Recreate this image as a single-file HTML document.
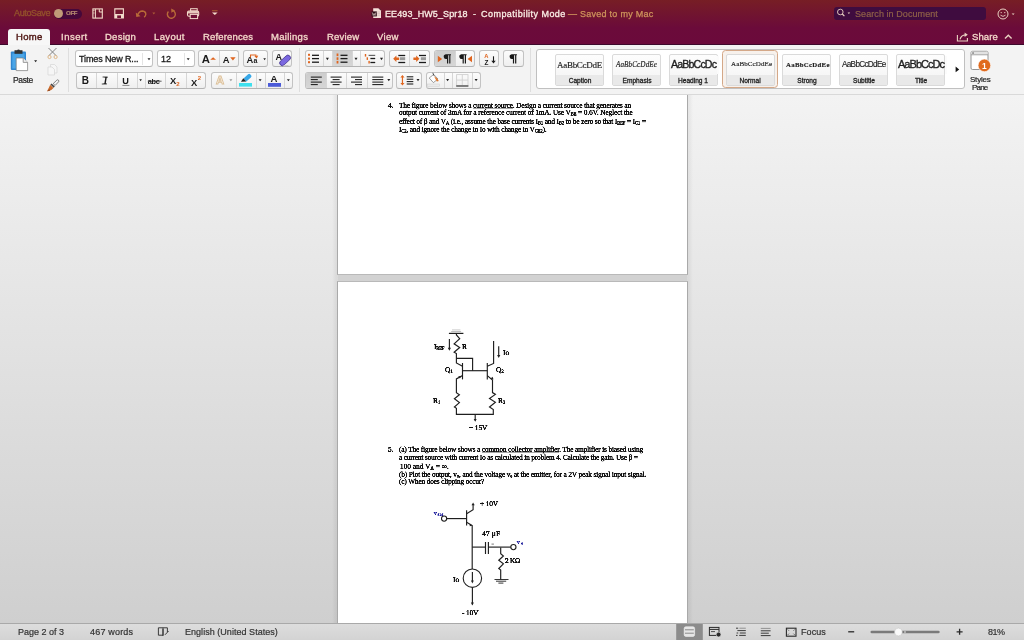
<!DOCTYPE html><html><head><meta charset="utf-8"><style>
*{margin:0;padding:0;box-sizing:border-box}
html,body{width:1024px;height:640px;overflow:hidden;font-family:"Liberation Sans",sans-serif;background:#e0e0e0;position:relative}
.a{position:absolute}
.t{position:absolute;white-space:pre;will-change:transform;-webkit-text-stroke:0.2px currentColor}
#title{left:0;top:0;width:1024px;height:44px;background:linear-gradient(#771e25 0px,#6b0b3a 28px,#6b0a3b 44px)}
#doc{left:0;top:95px;width:1024px;height:528px;background:linear-gradient(#f3f3f3,#cfcfcf)}

</style></head><body>
<div class="a" id="title"></div><div class="a" style="left:0;top:44px;width:1024px;height:1px;background:#3d0a2c"></div>
<div class="t" style="left:13.60px;top:8.20px;font-size:9.000px;line-height:10.80px;color:#93512c;letter-spacing:-0.374px;-webkit-text-stroke:0.35px currentColor;">AutoSave</div>
<div class="a" style="left:53.5px;top:8.5px;width:28.5px;height:10px;background:#45083a;border-radius:5px"></div>
<div class="a" style="left:54px;top:9px;width:9px;height:9px;background:#c19a78;border-radius:50%"></div>
<div class="t" style="left:66.00px;top:10.00px;font-size:6.000px;line-height:7.20px;color:#b58a70;font-weight:700;letter-spacing:-0.230px;">OFF</div>
<div class="t" style="left:384.70px;top:8.80px;font-size:9.000px;line-height:10.80px;color:#fbefe6;letter-spacing:0.103px;-webkit-text-stroke:0.3px currentColor;">EE493_HW5_Spr18</div>
<div class="t" style="left:472.50px;top:8.80px;font-size:9.000px;line-height:10.80px;color:#fbefe6;-webkit-text-stroke:0.3px currentColor;">-</div>
<div class="t" style="left:481.25px;top:8.80px;font-size:9.000px;line-height:10.80px;color:#fbefe6;letter-spacing:0.458px;-webkit-text-stroke:0.3px currentColor;">Compatibility Mode</div>
<div class="t" style="left:567.80px;top:8.80px;font-size:9.000px;line-height:10.80px;color:#cf955c;letter-spacing:0.261px;-webkit-text-stroke:0.25px currentColor;">— Saved to my Mac</div>
<div class="a" style="left:834.2px;top:6.8px;width:152px;height:13.3px;background:#3f0c3f;border-radius:3px"></div>
<div class="t" style="left:854.90px;top:8.70px;font-size:9.000px;line-height:10.80px;color:#8f6048;letter-spacing:0.074px;">Search in Document</div>
<div class="a" style="left:8px;top:29px;width:42px;height:16px;background:#f7f7f7;border-radius:3px 3px 0 0"></div>
<div class="t" style="left:15.60px;top:30.80px;font-size:9.500px;line-height:11.40px;color:#4e1512;letter-spacing:0.304px;-webkit-text-stroke:0.4px currentColor;">Home</div>
<div class="t" style="left:60.70px;top:30.80px;font-size:9.500px;line-height:11.40px;color:#f4dacb;letter-spacing:0.498px;-webkit-text-stroke:0.3px currentColor;">Insert</div>
<div class="t" style="left:105.40px;top:30.80px;font-size:9.500px;line-height:11.40px;color:#f4dacb;letter-spacing:0.255px;-webkit-text-stroke:0.3px currentColor;">Design</div>
<div class="t" style="left:154.20px;top:30.80px;font-size:9.500px;line-height:11.40px;color:#f4dacb;letter-spacing:0.385px;-webkit-text-stroke:0.3px currentColor;">Layout</div>
<div class="t" style="left:202.60px;top:30.80px;font-size:9.500px;line-height:11.40px;color:#f4dacb;letter-spacing:0.162px;-webkit-text-stroke:0.3px currentColor;">References</div>
<div class="t" style="left:270.70px;top:30.80px;font-size:9.500px;line-height:11.40px;color:#f4dacb;letter-spacing:0.299px;-webkit-text-stroke:0.3px currentColor;">Mailings</div>
<div class="t" style="left:326.50px;top:30.80px;font-size:9.500px;line-height:11.40px;color:#f4dacb;letter-spacing:0.180px;-webkit-text-stroke:0.3px currentColor;">Review</div>
<div class="t" style="left:376.50px;top:30.80px;font-size:9.500px;line-height:11.40px;color:#f4dacb;letter-spacing:0.311px;-webkit-text-stroke:0.3px currentColor;">View</div>
<div class="t" style="left:971.50px;top:30.80px;font-size:9.500px;line-height:11.40px;color:#f4dacb;letter-spacing:0.124px;-webkit-text-stroke:0.3px currentColor;">Share</div>
<div class="a" style="left:0px;top:45px;width:1024px;height:50px;background:#f3f3f3"></div>
<div class="a" style="left:0px;top:94px;width:1024px;height:1px;background:#d9d9d9"></div>
<div class="a" style="left:75.3px;top:50.4px;width:78.10000000000001px;height:17.000000000000007px;background:#fff;border:1px solid #c3c3c3;border-bottom-color:#b3b3b3;border-radius:3px;overflow:hidden">
</div>
<div class="a" style="left:141.5px;top:53px;width:1px;height:12px;background:#e4e4e4"></div>
<div class="t" style="left:78.50px;top:53.60px;font-size:9.000px;line-height:10.80px;color:#1a1a1a;letter-spacing:-0.120px;-webkit-text-stroke:0.3px currentColor;">Times New R...</div>
<div class="t" style="left:12.70px;top:75.20px;font-size:8.500px;line-height:10.20px;color:#222;letter-spacing:-0.346px;">Paste</div>
<div class="t" style="left:969.50px;top:75.40px;font-size:8.000px;line-height:9.60px;color:#222;letter-spacing:-0.215px;">Styles</div>
<div class="t" style="left:971.50px;top:83.20px;font-size:8.000px;line-height:9.60px;color:#222;letter-spacing:-0.823px;">Pane</div>
<div class="a" style="left:157.3px;top:50.4px;width:37.5px;height:17.000000000000007px;background:#fff;border:1px solid #c3c3c3;border-bottom-color:#b3b3b3;border-radius:3px;overflow:hidden">
</div>
<div class="a" style="left:184px;top:53px;width:1px;height:12px;background:#e4e4e4"></div>
<div class="t" style="left:160.80px;top:53.60px;font-size:9.000px;line-height:10.80px;color:#1a1a1a;-webkit-text-stroke:0.3px currentColor;">12</div>
<div class="a" style="left:198.2px;top:50.4px;width:41.0px;height:17.000000000000007px;background:linear-gradient(#fcfcfc,#efefef);border:1px solid #c3c3c3;border-bottom-color:#b3b3b3;border-radius:3px;overflow:hidden">
<div class="a" style="left:19.5px;top:0;width:1px;height:100%;background:#d6d6d6"></div>
</div>
<div class="a" style="left:242.7px;top:50.4px;width:25.69999999999999px;height:17.000000000000007px;background:linear-gradient(#fcfcfc,#efefef);border:1px solid #c3c3c3;border-bottom-color:#b3b3b3;border-radius:3px;overflow:hidden">
</div>
<div class="a" style="left:271.8px;top:50.4px;width:20.5px;height:17.000000000000007px;background:linear-gradient(#fcfcfc,#efefef);border:1px solid #c3c3c3;border-bottom-color:#b3b3b3;border-radius:3px;overflow:hidden">
</div>
<div class="a" style="left:298.5px;top:48px;width:1px;height:44px;background:#dedede"></div>
<div class="a" style="left:305.2px;top:50.4px;width:80.30000000000001px;height:17.000000000000007px;background:linear-gradient(#fcfcfc,#efefef);border:1px solid #c3c3c3;border-bottom-color:#b3b3b3;border-radius:3px;overflow:hidden">
<div class="a" style="left:25.80000000000001px;top:0;width:19.69999999999999px;height:100%;background:linear-gradient(#cdcdcd,#d6d6d6)"></div>
<div class="a" style="left:17.30000000000001px;top:0;width:1px;height:100%;background:#d6d6d6"></div>
<div class="a" style="left:25.80000000000001px;top:0;width:1px;height:100%;background:#d6d6d6"></div>
<div class="a" style="left:45.5px;top:0;width:1px;height:100%;background:#d6d6d6"></div>
<div class="a" style="left:54.30000000000001px;top:0;width:1px;height:100%;background:#d6d6d6"></div>
</div>
<div class="a" style="left:389.2px;top:50.4px;width:40.80000000000001px;height:17.000000000000007px;background:linear-gradient(#fcfcfc,#efefef);border:1px solid #c3c3c3;border-bottom-color:#b3b3b3;border-radius:3px;overflow:hidden">
<div class="a" style="left:19.19999999999999px;top:0;width:1px;height:100%;background:#d6d6d6"></div>
</div>
<div class="a" style="left:434.1px;top:50.4px;width:41.299999999999955px;height:17.000000000000007px;background:linear-gradient(#fcfcfc,#efefef);border:1px solid #c3c3c3;border-bottom-color:#b3b3b3;border-radius:3px;overflow:hidden">
<div class="a" style="left:-1.0px;top:0;width:20.799999999999955px;height:100%;background:linear-gradient(#cdcdcd,#d6d6d6)"></div>
<div class="a" style="left:19.799999999999955px;top:0;width:1px;height:100%;background:#d6d6d6"></div>
</div>
<div class="a" style="left:478.5px;top:50.4px;width:20.80000000000001px;height:17.000000000000007px;background:linear-gradient(#fcfcfc,#efefef);border:1px solid #c3c3c3;border-bottom-color:#b3b3b3;border-radius:3px;overflow:hidden">
</div>
<div class="a" style="left:503.2px;top:50.4px;width:20.400000000000034px;height:17.000000000000007px;background:linear-gradient(#fcfcfc,#efefef);border:1px solid #c3c3c3;border-bottom-color:#b3b3b3;border-radius:3px;overflow:hidden">
</div>
<div class="a" style="left:530.2px;top:48px;width:1px;height:44px;background:#dedede"></div>
<div class="a" style="left:68.2px;top:48px;width:1px;height:44px;background:#dedede"></div>
<div class="a" style="left:75.6px;top:72.4px;width:130.9px;height:16.19999999999999px;background:linear-gradient(#fcfcfc,#efefef);border:1px solid #c3c3c3;border-bottom-color:#b3b3b3;border-radius:3px;overflow:hidden">
<div class="a" style="left:19.0px;top:0;width:1px;height:100%;background:#d6d6d6"></div>
<div class="a" style="left:40.0px;top:0;width:1px;height:100%;background:#d6d6d6"></div>
<div class="a" style="left:60.0px;top:0;width:1px;height:100%;background:#d6d6d6"></div>
<div class="a" style="left:68.1px;top:0;width:1px;height:100%;background:#d6d6d6"></div>
<div class="a" style="left:88.9px;top:0;width:1px;height:100%;background:#d6d6d6"></div>
<div class="a" style="left:109.1px;top:0;width:1px;height:100%;background:#d6d6d6"></div>
</div>
<div class="a" style="left:210.5px;top:72.4px;width:82.10000000000002px;height:16.19999999999999px;background:linear-gradient(#fcfcfc,#efefef);border:1px solid #c3c3c3;border-bottom-color:#b3b3b3;border-radius:3px;overflow:hidden">
<div class="a" style="left:24.30000000000001px;top:0;width:1px;height:100%;background:#d6d6d6"></div>
<div class="a" style="left:44.19999999999999px;top:0;width:1px;height:100%;background:#d6d6d6"></div>
<div class="a" style="left:53.10000000000002px;top:0;width:1px;height:100%;background:#d6d6d6"></div>
<div class="a" style="left:72.89999999999998px;top:0;width:1px;height:100%;background:#d6d6d6"></div>
</div>
<div class="a" style="left:305.2px;top:72.4px;width:87.5px;height:16.19999999999999px;background:linear-gradient(#fcfcfc,#efefef);border:1px solid #c3c3c3;border-bottom-color:#b3b3b3;border-radius:3px;overflow:hidden">
<div class="a" style="left:-1.0px;top:0;width:20.80000000000001px;height:100%;background:linear-gradient(#cdcdcd,#d6d6d6)"></div>
<div class="a" style="left:19.80000000000001px;top:0;width:1px;height:100%;background:#d6d6d6"></div>
<div class="a" style="left:40.30000000000001px;top:0;width:1px;height:100%;background:#d6d6d6"></div>
<div class="a" style="left:61.10000000000002px;top:0;width:1px;height:100%;background:#d6d6d6"></div>
</div>
<div class="a" style="left:396.4px;top:72.4px;width:25.80000000000001px;height:16.19999999999999px;background:linear-gradient(#fcfcfc,#efefef);border:1px solid #c3c3c3;border-bottom-color:#b3b3b3;border-radius:3px;overflow:hidden">
</div>
<div class="a" style="left:425.5px;top:72.4px;width:55.10000000000002px;height:16.19999999999999px;background:linear-gradient(#fcfcfc,#efefef);border:1px solid #c3c3c3;border-bottom-color:#b3b3b3;border-radius:3px;overflow:hidden">
<div class="a" style="left:17.0px;top:0;width:1px;height:100%;background:#d6d6d6"></div>
<div class="a" style="left:25.19999999999999px;top:0;width:1px;height:100%;background:#d6d6d6"></div>
<div class="a" style="left:45.19999999999999px;top:0;width:1px;height:100%;background:#d6d6d6"></div>
</div>
<div class="a" style="left:535.5px;top:49.2px;width:429.2px;height:40.3px;background:#fff;border:1px solid #c0c0c0;border-radius:3px"></div>
<div class="a" style="left:722.2px;top:50.2px;width:56.1px;height:38.3px;background:#f7f1ec;border:1.6px solid #d4a888;border-radius:3.5px"></div>
<div class="a" style="left:555.3px;top:53.6px;width:49px;height:32.8px;background:linear-gradient(#fdfdfd,#f3f3f3);border:1px solid #dadada;border-radius:2px;overflow:hidden"><div class="a" style="left:0;top:20.2px;width:100%;height:12px;background:#e9e9e9"></div></div>
<div class="t" style="left:579.80px;top:76.64px;font-size:6.600px;line-height:7.92px;color:#222;transform:translateX(-50%);-webkit-text-stroke:0.3px currentColor;">Caption</div>
<div class="a" style="left:612.1px;top:53.6px;width:49px;height:32.8px;background:linear-gradient(#fdfdfd,#f3f3f3);border:1px solid #dadada;border-radius:2px;overflow:hidden"><div class="a" style="left:0;top:20.2px;width:100%;height:12px;background:#e9e9e9"></div></div>
<div class="t" style="left:636.60px;top:76.64px;font-size:6.600px;line-height:7.92px;color:#222;transform:translateX(-50%);-webkit-text-stroke:0.3px currentColor;">Emphasis</div>
<div class="a" style="left:668.5px;top:53.6px;width:49px;height:32.8px;background:linear-gradient(#fdfdfd,#f3f3f3);border:1px solid #dadada;border-radius:2px;overflow:hidden"><div class="a" style="left:0;top:20.2px;width:100%;height:12px;background:#e9e9e9"></div></div>
<div class="t" style="left:693.00px;top:76.64px;font-size:6.600px;line-height:7.92px;color:#222;transform:translateX(-50%);-webkit-text-stroke:0.3px currentColor;">Heading 1</div>
<div class="a" style="left:725.7px;top:53.6px;width:49px;height:32.8px;background:linear-gradient(#fdfdfd,#f3f3f3);border:1px solid #dadada;border-radius:2px;overflow:hidden"><div class="a" style="left:0;top:20.2px;width:100%;height:12px;background:#e9e9e9"></div></div>
<div class="t" style="left:750.20px;top:76.64px;font-size:6.600px;line-height:7.92px;color:#222;transform:translateX(-50%);-webkit-text-stroke:0.3px currentColor;">Normal</div>
<div class="a" style="left:782.4px;top:53.6px;width:49px;height:32.8px;background:linear-gradient(#fdfdfd,#f3f3f3);border:1px solid #dadada;border-radius:2px;overflow:hidden"><div class="a" style="left:0;top:20.2px;width:100%;height:12px;background:#e9e9e9"></div></div>
<div class="t" style="left:806.90px;top:76.64px;font-size:6.600px;line-height:7.92px;color:#222;transform:translateX(-50%);-webkit-text-stroke:0.3px currentColor;">Strong</div>
<div class="a" style="left:839.1px;top:53.6px;width:49px;height:32.8px;background:linear-gradient(#fdfdfd,#f3f3f3);border:1px solid #dadada;border-radius:2px;overflow:hidden"><div class="a" style="left:0;top:20.2px;width:100%;height:12px;background:#e9e9e9"></div></div>
<div class="t" style="left:863.60px;top:76.64px;font-size:6.600px;line-height:7.92px;color:#222;transform:translateX(-50%);-webkit-text-stroke:0.3px currentColor;">Subtitle</div>
<div class="a" style="left:896.3px;top:53.6px;width:49px;height:32.8px;background:linear-gradient(#fdfdfd,#f3f3f3);border:1px solid #dadada;border-radius:2px;overflow:hidden"><div class="a" style="left:0;top:20.2px;width:100%;height:12px;background:#e9e9e9"></div></div>
<div class="t" style="left:920.80px;top:76.64px;font-size:6.600px;line-height:7.92px;color:#222;transform:translateX(-50%);-webkit-text-stroke:0.3px currentColor;">Title</div>
<div class="a" style="left:0;top:0;width:1024px;height:640px;overflow:hidden;pointer-events:none">
<div class="t" style="left:557.40px;top:60.00px;font-size:9.000px;line-height:10.80px;color:#1e1e1e;font-family:'Liberation Serif';letter-spacing:-0.286px;-webkit-text-stroke:0.15px currentColor;">AaBbCcDdE</div>
<div class="t" style="left:616.20px;top:60.88px;font-size:7.200px;line-height:8.64px;color:#1e1e1e;font-family:'Liberation Serif';font-style:italic;letter-spacing:0.069px;-webkit-text-stroke:0.15px currentColor;">AaBbCcDdEe</div>
<div class="t" style="left:671.00px;top:58.24px;font-size:10.600px;line-height:12.72px;color:#1e1e1e;letter-spacing:-0.837px;-webkit-text-stroke:0.35px currentColor;">AaBbCcDc</div>
<div class="t" style="left:730.50px;top:60.40px;font-size:7.000px;line-height:8.40px;color:#1e1e1e;font-family:'Liberation Serif';letter-spacing:0.120px;-webkit-text-stroke:0.15px currentColor;">AaBbCcDdEe</div>
<div class="t" style="left:786.00px;top:60.92px;font-size:6.800px;line-height:8.16px;color:#1e1e1e;font-family:'Liberation Serif';font-weight:700;letter-spacing:0.291px;-webkit-text-stroke:0.15px currentColor;">AaBbCcDdEe</div>
<div class="t" style="left:842.00px;top:60.08px;font-size:8.200px;line-height:9.84px;color:#1e1e1e;letter-spacing:-0.699px;-webkit-text-stroke:0.15px currentColor;">AaBbCcDdEe</div>
<div class="t" style="left:898.40px;top:58.00px;font-size:11.000px;line-height:13.20px;color:#1e1e1e;letter-spacing:-0.972px;-webkit-text-stroke:0.35px currentColor;">AaBbCcDc</div>
</div>
<div class="a" style="left:716.5px;top:56px;width:2px;height:18px;background:#fbfbfb"></div>
<div class="a" style="left:944.8px;top:56px;width:2px;height:18px;background:#fbfbfb"></div>
<div class="a" id="doc"></div>
<div class="a" style="left:332px;top:95px;width:361px;height:528px;background:linear-gradient(90deg,rgba(0,0,0,0),rgba(0,0,0,0.05) 4px,rgba(0,0,0,0.05) 357px,rgba(0,0,0,0))"></div>
<div class="a" style="left:337px;top:95px;width:351px;height:180px;background:#fff;border:1px solid #a9a9a9;border-top:none;border-bottom-color:#b9b9b9"></div>
<div class="a" style="left:338px;top:275px;width:349px;height:6px;background:#d2d2d2"></div>
<div class="a" style="left:337px;top:281px;width:351px;height:343px;background:#fff;border:1px solid #a9a9a9;border-bottom:none;border-top-color:#b9b9b9"></div>
<div class="t" style="left:387.80px;top:87.69px;font-size:28.800px;line-height:34.56px;color:#141414;height:34.56px;transform:scale(0.25000);transform-origin:0 50%;font-family:'Liberation Serif';-webkit-text-stroke:1.8px currentColor;">4.</div>
<div class="t" style="left:398.75px;top:87.69px;font-size:28.800px;line-height:34.56px;color:#141414;height:34.56px;transform:scale(0.25000);transform-origin:0 50%;font-family:'Liberation Serif';letter-spacing:-0.345px;-webkit-text-stroke:1.8px currentColor;">The figure below shows a <span style="text-decoration:underline;text-decoration-thickness:0.08em;text-underline-offset:0.03em">current source</span>. Design a current source that generates an</div>
<div class="t" style="left:398.75px;top:94.59px;font-size:28.800px;line-height:34.56px;color:#141414;height:34.56px;transform:scale(0.25000);transform-origin:0 50%;font-family:'Liberation Serif';letter-spacing:-0.279px;-webkit-text-stroke:1.8px currentColor;">output current of 3mA for a reference current of 1mA. Use V<span style="font-size:0.64em;vertical-align:-0.16em">BE</span> = 0.6V. Neglect the</div>
<div class="t" style="left:398.75px;top:103.59px;font-size:28.800px;line-height:34.56px;color:#141414;height:34.56px;transform:scale(0.25000);transform-origin:0 50%;font-family:'Liberation Serif';letter-spacing:-0.397px;-webkit-text-stroke:1.8px currentColor;">effect of β and V<span style="font-size:0.64em;vertical-align:-0.16em">A</span> (i.e., assume the base currents I<span style="font-size:0.64em;vertical-align:-0.16em">B1</span> and I<span style="font-size:0.64em;vertical-align:-0.16em">B2</span> to be zero so that I<span style="font-size:0.64em;vertical-align:-0.16em">REF</span> = I<span style="font-size:0.64em;vertical-align:-0.16em">C1</span> =</div>
<div class="t" style="left:398.75px;top:111.79px;font-size:28.800px;line-height:34.56px;color:#141414;height:34.56px;transform:scale(0.25000);transform-origin:0 50%;font-family:'Liberation Serif';letter-spacing:-0.429px;-webkit-text-stroke:1.8px currentColor;">I<span style="font-size:0.64em;vertical-align:-0.16em">C2</span>, and ignore the change in Io with change in V<span style="font-size:0.64em;vertical-align:-0.16em">CE2</span>).</div>
<div class="t" style="left:388.00px;top:431.99px;font-size:28.800px;line-height:34.56px;color:#141414;height:34.56px;transform:scale(0.25000);transform-origin:0 50%;font-family:'Liberation Serif';-webkit-text-stroke:1.8px currentColor;">5.</div>
<div class="t" style="left:399.00px;top:431.99px;font-size:28.800px;line-height:34.56px;color:#141414;height:34.56px;transform:scale(0.25000);transform-origin:0 50%;font-family:'Liberation Serif';letter-spacing:-0.409px;-webkit-text-stroke:1.8px currentColor;">(a) The figure below shows a <span style="text-decoration:underline;text-decoration-thickness:0.08em;text-underline-offset:0.03em">common collector amplifier</span>. The amplifier is biased using</div>
<div class="t" style="left:399.00px;top:439.79px;font-size:28.800px;line-height:34.56px;color:#141414;height:34.56px;transform:scale(0.25000);transform-origin:0 50%;font-family:'Liberation Serif';letter-spacing:-0.495px;-webkit-text-stroke:1.8px currentColor;">a current source with current Io as calculated in problem 4. Calculate the gain. Use β =</div>
<div class="t" style="left:399.50px;top:448.79px;font-size:28.800px;line-height:34.56px;color:#141414;height:34.56px;transform:scale(0.25000);transform-origin:0 50%;font-family:'Liberation Serif';letter-spacing:0.275px;-webkit-text-stroke:1.8px currentColor;">100 and V<span style="font-size:0.64em;vertical-align:-0.16em">A</span> = ∞.</div>
<div class="t" style="left:398.70px;top:456.54px;font-size:28.800px;line-height:34.56px;color:#141414;height:34.56px;transform:scale(0.25000);transform-origin:0 50%;font-family:'Liberation Serif';letter-spacing:-0.366px;-webkit-text-stroke:1.8px currentColor;">(b) Plot the output, v<span style="font-size:0.64em;vertical-align:-0.16em">o</span>, and the voltage v<span style="font-size:0.64em;vertical-align:-0.16em">e</span> at the emitter, for a 2V peak signal input signal.</div>
<div class="t" style="left:399.00px;top:463.79px;font-size:28.800px;line-height:34.56px;color:#141414;height:34.56px;transform:scale(0.25000);transform-origin:0 50%;font-family:'Liberation Serif';letter-spacing:-0.411px;-webkit-text-stroke:1.8px currentColor;">(c) When does clipping occur?</div>
<div class="t" style="left:434.00px;top:328.54px;font-size:29.600px;line-height:35.52px;color:#141414;height:35.52px;transform:scale(0.25000);transform-origin:0 50%;font-family:'Liberation Serif';letter-spacing:-0.910px;-webkit-text-stroke:1.8px currentColor;">I<span style="font-size:0.64em;vertical-align:-0.16em">REF</span></div>
<div class="t" style="left:461.90px;top:328.54px;font-size:29.600px;line-height:35.52px;color:#141414;height:35.52px;transform:scale(0.25000);transform-origin:0 50%;font-family:'Liberation Serif';-webkit-text-stroke:1.8px currentColor;">R</div>
<div class="t" style="left:503.20px;top:335.04px;font-size:29.600px;line-height:35.52px;color:#141414;height:35.52px;transform:scale(0.25000);transform-origin:0 50%;font-family:'Liberation Serif';-webkit-text-stroke:1.8px currentColor;">Io</div>
<div class="t" style="left:444.90px;top:352.24px;font-size:29.600px;line-height:35.52px;color:#141414;height:35.52px;transform:scale(0.25000);transform-origin:0 50%;font-family:'Liberation Serif';-webkit-text-stroke:1.8px currentColor;">Q<span style="font-size:0.64em;vertical-align:-0.16em">1</span></div>
<div class="t" style="left:495.70px;top:352.24px;font-size:29.600px;line-height:35.52px;color:#141414;height:35.52px;transform:scale(0.25000);transform-origin:0 50%;font-family:'Liberation Serif';-webkit-text-stroke:1.8px currentColor;">Q<span style="font-size:0.64em;vertical-align:-0.16em">2</span></div>
<div class="t" style="left:433.40px;top:383.34px;font-size:29.600px;line-height:35.52px;color:#141414;height:35.52px;transform:scale(0.25000);transform-origin:0 50%;font-family:'Liberation Serif';-webkit-text-stroke:1.8px currentColor;">R<span style="font-size:0.64em;vertical-align:-0.16em">1</span></div>
<div class="t" style="left:498.40px;top:383.34px;font-size:29.600px;line-height:35.52px;color:#141414;height:35.52px;transform:scale(0.25000);transform-origin:0 50%;font-family:'Liberation Serif';-webkit-text-stroke:1.8px currentColor;">R<span style="font-size:0.64em;vertical-align:-0.16em">2</span></div>
<div class="t" style="left:468.90px;top:409.74px;font-size:29.600px;line-height:35.52px;color:#141414;height:35.52px;transform:scale(0.25000);transform-origin:0 50%;font-family:'Liberation Serif';letter-spacing:-0.400px;-webkit-text-stroke:1.8px currentColor;">− 15V</div>
<div class="t" style="left:480.20px;top:486.24px;font-size:29.600px;line-height:35.52px;color:#141414;height:35.52px;transform:scale(0.25000);transform-origin:0 50%;font-family:'Liberation Serif';letter-spacing:-0.600px;-webkit-text-stroke:1.8px currentColor;">+ 10V</div>
<div class="t" style="left:481.90px;top:515.94px;font-size:29.600px;line-height:35.52px;color:#141414;height:35.52px;transform:scale(0.25000);transform-origin:0 50%;font-family:'Liberation Serif';letter-spacing:0.834px;-webkit-text-stroke:1.8px currentColor;">47 μF</div>
<div class="t" style="left:505.20px;top:543.04px;font-size:29.600px;line-height:35.52px;color:#141414;height:35.52px;transform:scale(0.25000);transform-origin:0 50%;font-family:'Liberation Serif';letter-spacing:-1.366px;-webkit-text-stroke:1.8px currentColor;">2 KΩ</div>
<div class="t" style="left:452.90px;top:561.84px;font-size:29.600px;line-height:35.52px;color:#141414;height:35.52px;transform:scale(0.25000);transform-origin:0 50%;font-family:'Liberation Serif';-webkit-text-stroke:1.8px currentColor;">Io</div>
<div class="t" style="left:461.90px;top:594.64px;font-size:29.600px;line-height:35.52px;color:#141414;height:35.52px;transform:scale(0.25000);transform-origin:0 50%;font-family:'Liberation Serif';letter-spacing:-0.593px;-webkit-text-stroke:1.8px currentColor;">- 10V</div>
<div class="t" style="left:434.30px;top:500.30px;font-size:22.000px;line-height:26.40px;color:#1a1a9a;height:26.40px;transform:scale(0.25000);transform-origin:0 50%;font-family:'Liberation Serif';letter-spacing:3.114px;-webkit-text-stroke:1.8px currentColor;">v<span style="font-size:0.64em;vertical-align:-0.16em">sig</span></div>
<div class="t" style="left:517.40px;top:529.10px;font-size:22.000px;line-height:26.40px;color:#1a1a9a;height:26.40px;transform:scale(0.25000);transform-origin:0 50%;font-family:'Liberation Serif';letter-spacing:5.933px;-webkit-text-stroke:1.8px currentColor;">v<span style="font-size:0.64em;vertical-align:-0.16em">o</span></div>
<svg class="a" style="left:0;top:0" width="1024" height="640"><g fill="none" stroke="#1e1e1e" stroke-width="1.15" stroke-linejoin="miter"><line x1="452" y1="329.9" x2="460.4" y2="329.9" stroke="#9a9a9a" stroke-width="0.5"/><line x1="451.2" y1="331.6" x2="461.1" y2="331.6" stroke="#8a8a8a" stroke-width="0.6"/><line x1="448.9" y1="333.4" x2="463.4" y2="333.4" stroke-width="1.2"/><path d="M456.4 333.4 V335 L459.7 338.6 L454.1 343.8 L459.7 347.5 L454.1 352.2 L456.4 353.6 V363 L462.5 366.3"/><path d="M456.4 358.3 H472.6 V370.7"/><path d="M462.5 363 V379.4"/><path d="M487.3 363 V379.4"/><path d="M462.5 370.7 H487.3"/><path d="M487.3 366.3 L493.6 363.4 V341"/><path d="M462.5 375.6 L456.4 378.9 V392.6 L459.4 394.7 L454.4 398.8 L459.4 402.6 L454.4 407 L456.4 408.4 V414.3 H493.3 V409.6 L489.5 407 L495.4 402.3 L489.5 398.5 L495.4 394.4 L492.5 392.6 V380 L487.3 375.6"/><path d="M458.2 376.2 l3.4 -0.2 l-1.8 2.4z" fill="#222" stroke="none"/><path d="M490.6 378.6 l2.9 0.8 l-0.9 -2.7z" fill="#222" stroke="none"/><path d="M475.2 414.3 V420.5"/><path d="M473.7 419 h3 l-1.5 2.8z" fill="#222" stroke="none"/><path d="M449.4 339 V349"/><path d="M447.8 347.8 h3.2 l-1.6 3z" fill="#222" stroke="none"/><path d="M498.7 346.3 V356.2"/><path d="M497.1 355.1 h3.2 l-1.6 3z" fill="#222" stroke="none"/><path d="M466.6 510.2 V525.5"/><path d="M466.6 513.8 L473.1 509.7 V504"/><path d="M471.5 505.2 l1.6 -2.6 l1.6 2.6z" fill="#222" stroke="none"/><circle cx="444.1" cy="518.6" r="2.6" stroke-width="1.1"/><path d="M446.7 518.6 H466.6"/><path d="M466.6 522.3 L472.2 525.5 V569"/><path d="M469.6 523.6 l2.8 1.9 l-2.6 0.8z" fill="#222" stroke="none"/><path d="M472.2 547.1 H485.5"/><path d="M485.5 542 V554 M488.4 542 V554"/><path d="M488.4 547.1 H510.8"/><circle cx="513.4" cy="547.1" r="2.6" stroke-width="1.1"/><path d="M491.5 544.1 h2.4" stroke-width="0.6"/><path d="M500.7 547.4 V553.7 L503.4 556 L498.75 560.3 L503.4 563.8 L498.75 568.5 L500.7 570 V579.5" stroke-width="1.15"/><path d="M494.5 579.5 H508.5 M496 581.2 H506.2 M498.4 583.1 H503.4" stroke-width="0.9"/><circle cx="472.4" cy="578.2" r="9.2" stroke-width="1.1"/><path d="M472.4 572 V582"/><path d="M471 580.6 h2.8 l-1.4 2.8z" fill="#222" stroke="none"/><path d="M472.4 587.4 V604.4"/><path d="M470.9 602.6 h3 l-1.5 3z" fill="#222" stroke="none"/></g></svg>
<div class="a" style="left:0px;top:623px;width:1024px;height:17px;background:linear-gradient(#dddddd,#d3d3d3);border-top:1px solid #a9a9a9"></div>
<div class="t" style="left:17.60px;top:626.80px;font-size:9.000px;line-height:10.80px;color:#333;letter-spacing:0.006px;">Page 2 of 3</div>
<div class="t" style="left:89.80px;top:626.80px;font-size:9.000px;line-height:10.80px;color:#333;letter-spacing:0.185px;">467 words</div>
<div class="t" style="left:185.00px;top:626.80px;font-size:9.000px;line-height:10.80px;color:#333;letter-spacing:0.035px;">English (United States)</div>
<div class="t" style="left:801.00px;top:626.80px;font-size:9.000px;line-height:10.80px;color:#333;letter-spacing:0.074px;">Focus</div>
<div class="t" style="left:987.70px;top:626.80px;font-size:9.000px;line-height:10.80px;color:#333;letter-spacing:-0.503px;">81%</div>
<svg class="a" style="left:0;top:0" width="1024" height="640"><rect x="92.9" y="8.9" width="9.4" height="9.2" fill="none" stroke="#f3dccb" stroke-width="1.1"/><line x1="95.4" y1="8.9" x2="95.4" y2="18.1" stroke="#f3dccb" stroke-width="1"/><path d="M99.3 9.2 v2.8 h2.7" fill="none" stroke="#f3dccb" stroke-width="1"/><rect x="93.4" y="10" width="1" height="1" fill="#f3dccb"/><rect x="93.4" y="12.5" width="1" height="1" fill="#f3dccb"/><path d="M114.8 8.9 h8.6 v9 h-8.6 z" fill="none" stroke="#f3dccb" stroke-width="1.1"/><path d="M115 14 h8.4 v4 h-8.4z" fill="#f3dccb"/><rect x="117.2" y="15.4" width="3.8" height="2.6" fill="#6e1232"/><path d="M137.2 15.8 Q139 11 142.5 11 Q146 11.5 145.8 14.5 Q145.5 16.5 144 17" fill="none" stroke="#b86a38" stroke-width="1.4"/><path d="M135.8 12.4 L136.3 17 L140.6 16.2 Z" fill="#b86a38"/><path d="M152.3 12.6 h3 l-1.5 1.8z" fill="#b86a38" opacity="0.8"/><path d="M168.4 11.5 A4 4 0 1 0 172.6 10.4" fill="none" stroke="#b86a38" stroke-width="1.4"/><path d="M171.2 8.4 L175 10.6 L171.4 12.8 Z" fill="#b86a38"/><rect x="190.6" y="8.7" width="6.6" height="2.4" fill="none" stroke="#f3dccb" stroke-width="1"/><rect x="187.5" y="11" width="11.2" height="5.2" rx="1.4" fill="none" stroke="#f3dccb" stroke-width="1.1"/><rect x="188" y="11.3" width="10.2" height="2.2" fill="#f3dccb" opacity="0.9"/><rect x="190.2" y="14.4" width="7.4" height="4.2" fill="#6e1034" stroke="#f3dccb" stroke-width="1"/><path d="M373.2 8.2 h5.6 l2.2 2.2 v7.6 h-7.8z" fill="#f4e0d8"/><path d="M378.8 8.2 l2.2 2.2" stroke="#3a1020" stroke-width="0.7"/><path d="M377.2 12 h3 M377.2 13.6 h3 M377.2 15.2 h3" stroke="#c9b0b0" stroke-width="0.6"/><rect x="371.6" y="11.4" width="5.2" height="5" fill="#2a0a14"/><path d="M372.3 12.4 l0.9 3.2 l0.9 -2.2 l0.9 2.2 l0.9 -3.2" fill="none" stroke="#f4e0d8" stroke-width="0.6"/><rect x="212" y="10" width="5.6" height="1.3" fill="#9a4a2e"/><path d="M212 12.4 h5.6 l-2.8 2.6z" fill="#f3dccb"/><rect x="10.8" y="51.5" width="15.2" height="18.5" rx="1" fill="#2f86d0"/><rect x="12.3" y="53.5" width="12.2" height="15" fill="#4aa6e8"/><path d="M14.5 50.2 h8 v3.6 h-8z" fill="#333"/><circle cx="18.5" cy="50.8" r="1.3" fill="#333"/><path d="M16.2 58 h7 l4.4 4.4 v8.2 h-11.4z" fill="#fff" stroke="#777" stroke-width="0.7"/><path d="M23.2 58 v4.4 h4.4" fill="#eee" stroke="#777" stroke-width="0.7"/><path d="M34.1 60.2 h3 l-1.5 2z" fill="#222"/><path d="M48.5 48 L56 55.5 M56.5 48 L49 55.5" stroke="#777" stroke-width="0.9" fill="none"/><circle cx="49.5" cy="57" r="1.6" fill="none" stroke="#d8a870" stroke-width="0.8"/><circle cx="55.6" cy="57" r="1.6" fill="none" stroke="#d8a870" stroke-width="0.8"/><path d="M50.5 64.5 h4 l2.5 2.5 v6 h-6.5z" fill="#f6f6f6" stroke="#d6d6d6" stroke-width="0.7"/><path d="M48 67 h4 l2.5 2.5 v5.5 h-6.5z" fill="#f6f6f6" stroke="#d6d6d6" stroke-width="0.7"/><path d="M53.2 83.6 l3.6 -3.4 a1.2 1.2 0 0 1 1.7 1.7 l-3.4 3.6z" fill="#f2f2f2" stroke="#555" stroke-width="0.7"/><path d="M51.6 83.4 l3.2 3.2 l-1.2 1.2 l-3.2 -3.2z" fill="#444"/><path d="M50.2 84.8 l3.2 3.2 q-2 3 -6 3.6 q-0.4 -0.4 0 -1 q1.6 -3 2.8 -5.8z" fill="#c96a2c"/><path d="M47.4 90.6 l2.2 -1.2 l0.4 1.4z" fill="#7a3a18"/><path d="M147.5 58.2 h3 l-1.5 2z" fill="#222"/><path d="M186.7 58.2 h3 l-1.5 2z" fill="#222"/><text x="201.7" y="62.8" font-family="Liberation Sans" font-weight="700" font-size="11.3" fill="#1a1a1a">A</text><path d="M210.2 59.8 h5.8 l-2.9 -2.6z" fill="#e0651f"/><text x="222.7" y="62.8" font-family="Liberation Sans" font-weight="700" font-size="9.4" fill="#1a1a1a">A</text><path d="M230.2 57.3 h5.4 l-2.7 3.2z" fill="#e0651f"/><text x="246.6" y="62.8" font-family="Liberation Sans" font-weight="700" font-size="9.4" fill="#1a1a1a">A</text><text x="253.6" y="62.8" font-family="Liberation Sans" font-weight="700" font-size="7" fill="#1a1a1a">a</text><path d="M250.5 57.4 v-2.4 h5.4 v2" fill="none" stroke="#e0651f" stroke-width="1.1"/><path d="M254.4 56.2 l2.4 2.4 l1.4-3z" fill="#e0651f"/><path d="M263.3 58.2 h2.6 l-1.3 2z" fill="#222"/><text x="275.6" y="60.2" font-family="Liberation Sans" font-weight="700" font-size="9" fill="#1a1a1a">A</text><path d="M280.4 61.2 l5.6 -5.2 a2.6 2.6 0 0 1 3.8 3.6 l-5.6 5.2 a2.6 2.6 0 0 1 -3.8 -3.6z" fill="#7b68e0" stroke="#40308c" stroke-width="0.8"/><path d="M283 66 l5.5 -0.5" stroke="#bbb" stroke-width="0.8"/><rect x="308" y="53.8" width="2" height="2" fill="#e0651f"/><rect x="308" y="57.6" width="2" height="2" fill="#e0651f"/><rect x="308" y="61.2" width="2" height="2" fill="#e0651f"/><line x1="312" y1="55.3" x2="319" y2="55.3" stroke="#1a1a1a" stroke-width="1.3"/><line x1="312" y1="58.6" x2="319" y2="58.6" stroke="#1a1a1a" stroke-width="1.3"/><line x1="312" y1="62.2" x2="319" y2="62.2" stroke="#1a1a1a" stroke-width="1.3"/><path d="M325.9 57.8 h3 l-1.5 2.4z" fill="#222"/><rect x="336.6" y="53.5" width="1.8" height="2.6" fill="#e0651f"/><rect x="336.6" y="57.300000000000004" width="1.8" height="2.6" fill="#e0651f"/><rect x="336.6" y="60.900000000000006" width="1.8" height="2.6" fill="#e0651f"/><line x1="340.5" y1="55.3" x2="347.5" y2="55.3" stroke="#1a1a1a" stroke-width="1.3"/><line x1="340.5" y1="58.6" x2="347.5" y2="58.6" stroke="#1a1a1a" stroke-width="1.3"/><line x1="340.5" y1="62.2" x2="347.5" y2="62.2" stroke="#1a1a1a" stroke-width="1.3"/><path d="M354.5 57.8 h3 l-1.5 2.4z" fill="#222"/><rect x="364.8" y="54.0" width="1.4" height="2.6" fill="#e0651f"/><rect x="366.6" y="57.300000000000004" width="1.4" height="2.6" fill="#e0651f"/><rect x="368.4" y="60.900000000000006" width="1.4" height="2.6" fill="#e0651f"/><line x1="368.6" y1="55.4" x2="375.20000000000005" y2="55.4" stroke="#666" stroke-width="1.2"/><line x1="370.4" y1="58.5" x2="375.2" y2="58.5" stroke="#1a1a1a" stroke-width="1.3"/><line x1="370.4" y1="62.5" x2="375.2" y2="62.5" stroke="#1a1a1a" stroke-width="1.3"/><path d="M380.0 57.8 h3 l-1.5 2.4z" fill="#222"/><path d="M393.2 58.8 l3.2 -3.2 v2 h2.8 v2.4 h-2.8 v2z" fill="#e0651f"/><line x1="398.3" y1="55.5" x2="405.2" y2="55.5" stroke="#1a1a1a" stroke-width="1.3"/><line x1="398.3" y1="62.5" x2="405.2" y2="62.5" stroke="#1a1a1a" stroke-width="1.3"/><rect x="400" y="57.2" width="5.2" height="3" fill="#999"/><path d="M419.4 58.8 l-3.2 -3.2 v2 h-2.8 v2.4 h2.8 v2z" fill="#e0651f"/><line x1="419" y1="55.5" x2="426" y2="55.5" stroke="#1a1a1a" stroke-width="1.3"/><line x1="419" y1="62.5" x2="426" y2="62.5" stroke="#1a1a1a" stroke-width="1.3"/><rect x="420.8" y="57.2" width="5.2" height="3" fill="#999"/><path d="M437.8 55.8 l4.4 3.2 l-4.4 3.2z" fill="#e0651f"/><path d="M445.8 54.2 H451.0 V55.300000000000004 H450.4 V63.6 H449.2 V55.300000000000004 H448.2 V63.6 H447.0 V59.0 A2.6 2.4 0 0 1 445.8 54.2z" fill="#1a1a1a"/><path d="M461.40000000000003 54.2 H466.6 V55.300000000000004 H466.0 V63.6 H464.8 V55.300000000000004 H463.8 V63.6 H462.6 V59.0 A2.6 2.4 0 0 1 461.40000000000003 54.2z" fill="#1a1a1a"/><path d="M472 55.8 l-4.4 3.2 l4.4 3.2z" fill="#e0651f"/><text x="484.2" y="57.9" font-family="Liberation Sans" font-weight="700" font-size="5.8" fill="#e0651f">A</text><text x="484.4" y="64.6" font-family="Liberation Sans" font-weight="700" font-size="6.4" fill="#1a1a1a">Z</text><line x1="493.5" y1="56.3" x2="493.5" y2="62" stroke="#1a1a1a" stroke-width="1.1"/><path d="M491.3 60.8 h4.4 l-2.2 2.6z" fill="#1a1a1a"/><path d="M511.70000000000005 54.2 H516.9 V55.300000000000004 H516.3000000000001 V63.6 H515.1 V55.300000000000004 H514.1 V63.6 H512.9 V59.0 A2.6 2.4 0 0 1 511.70000000000005 54.2z" fill="#1a1a1a"/><text x="81.8" y="84.3" font-family="Liberation Sans" font-weight="700" font-size="10" fill="#1a1a1a">B</text><text x="103.6" y="84.3" font-family="Liberation Serif" font-weight="700" font-style="italic" font-size="10" fill="#1a1a1a">I</text><line x1="102.6" y1="77" x2="107.6" y2="77" stroke="#1a1a1a" stroke-width="0.8"/><line x1="101.8" y1="84" x2="106.8" y2="84" stroke="#1a1a1a" stroke-width="0.8"/><text x="122.3" y="83.6" font-family="Liberation Sans" font-weight="700" font-size="9.2" fill="#1a1a1a">U</text><line x1="122.4" y1="85.4" x2="129.4" y2="85.4" stroke="#888" stroke-width="1"/><path d="M139.29999999999998 79.2 h2.6 l-1.3 2z" fill="#222"/><text x="147.8" y="84" font-family="Liberation Sans" font-weight="700" font-size="7.4" fill="#1a1a1a" letter-spacing="-0.3">abc</text><line x1="147.8" y1="81.2" x2="161.6" y2="81.2" stroke="#1a1a1a" stroke-width="0.7"/><text x="170" y="84" font-family="Liberation Sans" font-weight="700" font-size="9.4" fill="#1a1a1a">X</text><text x="176.3" y="86.2" font-family="Liberation Sans" font-weight="700" font-size="6" fill="#e0651f">2</text><text x="191" y="85.6" font-family="Liberation Sans" font-weight="700" font-size="9.4" fill="#1a1a1a">X</text><text x="197.8" y="80" font-family="Liberation Sans" font-weight="700" font-size="6" fill="#e0651f">2</text><text x="215.9" y="84.4" font-family="Liberation Sans" font-weight="700" font-size="11.2" fill="#fffaf2" stroke="#dcc09a" stroke-width="0.9">A</text><path d="M229.4 79.2 h3 l-1.5 2z" fill="#999"/><path d="M243.5 78.5 l4.6 -4.2 a1.6 1.6 0 0 1 2.3 0.1 l0.6 0.7 a1.6 1.6 0 0 1 -0.1 2.3 l-4.6 4.2z" fill="#38a8e8"/><path d="M241 81.8 l2.2 -3.6 l3.2 3.4z" fill="#222"/><rect x="239" y="83" width="13" height="3.6" fill="#3ee0ee"/><path d="M258.6 79.2 h3 l-1.5 2z" fill="#222"/><text x="270.6" y="82" font-family="Liberation Sans" font-weight="700" font-size="9.6" fill="#1a1a1a">A</text><rect x="268" y="83" width="13" height="3.8" fill="#4b5bd8"/><path d="M286.9 79.2 h3 l-1.5 2z" fill="#222"/><line x1="310.8" y1="77.1" x2="321.8" y2="77.1" stroke="#1a1a1a" stroke-width="1.05"/><line x1="310.8" y1="79.6" x2="317.8" y2="79.6" stroke="#1a1a1a" stroke-width="1.05"/><line x1="310.8" y1="82.1" x2="321.8" y2="82.1" stroke="#1a1a1a" stroke-width="1.05"/><line x1="310.8" y1="84.6" x2="317.8" y2="84.6" stroke="#1a1a1a" stroke-width="1.05"/><line x1="330.6" y1="77.1" x2="341.6" y2="77.1" stroke="#1a1a1a" stroke-width="1.05"/><line x1="332.6" y1="79.6" x2="339.6" y2="79.6" stroke="#1a1a1a" stroke-width="1.05"/><line x1="330.6" y1="82.1" x2="341.6" y2="82.1" stroke="#1a1a1a" stroke-width="1.05"/><line x1="332.6" y1="84.6" x2="339.6" y2="84.6" stroke="#1a1a1a" stroke-width="1.05"/><line x1="351" y1="77.1" x2="362" y2="77.1" stroke="#1a1a1a" stroke-width="1.05"/><line x1="355" y1="79.6" x2="362" y2="79.6" stroke="#1a1a1a" stroke-width="1.05"/><line x1="351" y1="82.1" x2="362" y2="82.1" stroke="#1a1a1a" stroke-width="1.05"/><line x1="355" y1="84.6" x2="362" y2="84.6" stroke="#1a1a1a" stroke-width="1.05"/><line x1="372.3" y1="77.1" x2="383.3" y2="77.1" stroke="#1a1a1a" stroke-width="1.05"/><line x1="372.3" y1="79.6" x2="383.3" y2="79.6" stroke="#1a1a1a" stroke-width="1.05"/><line x1="372.3" y1="82.1" x2="383.3" y2="82.1" stroke="#1a1a1a" stroke-width="1.05"/><line x1="372.3" y1="84.6" x2="383.3" y2="84.6" stroke="#1a1a1a" stroke-width="1.05"/><path d="M387.3 79.10000000000001 h3 l-1.5 2.2z" fill="#222"/><path d="M400.4 77.6 l2.05 -2.5 l2.05 2.5z M400.4 82.9 l2.05 2.5 l2.05 -2.5z" fill="#e0651f"/><line x1="402.45" y1="77" x2="402.45" y2="83.5" stroke="#e0651f" stroke-width="1.2"/><line x1="406.7" y1="76.8" x2="413.3" y2="76.8" stroke="#1a1a1a" stroke-width="1.05"/><line x1="406.7" y1="79.2" x2="413.3" y2="79.2" stroke="#1a1a1a" stroke-width="1.05"/><line x1="406.7" y1="81.6" x2="413.3" y2="81.6" stroke="#1a1a1a" stroke-width="1.05"/><line x1="406.7" y1="84" x2="413.3" y2="84" stroke="#1a1a1a" stroke-width="1.05"/><path d="M416.5 79.10000000000001 h3 l-1.5 2.2z" fill="#222"/><path d="M429.2 78 l4.5 -3.6 l4.2 4.6 l-4.5 3.6z" fill="#fff" stroke="#777" stroke-width="0.7"/><path d="M434 76 l3.2 2.4 l1.6 2.6 l-2 0.4z" fill="#e0762a"/><path d="M432.8 72.8 l1.2 3" stroke="#333" stroke-width="0.8"/><rect x="427.4" y="84" width="12.2" height="2.4" fill="#eaeaea" stroke="#cfcfcf" stroke-width="0.5"/><path d="M446.1 79.10000000000001 h3 l-1.5 2.2z" fill="#222"/><rect x="456.6" y="74.6" width="11.4" height="11" fill="none" stroke="#d0d0d0" stroke-width="0.9"/><line x1="462.3" y1="74.6" x2="462.3" y2="85.6" stroke="#d0d0d0" stroke-width="0.9"/><line x1="456.6" y1="80.1" x2="468" y2="80.1" stroke="#d0d0d0" stroke-width="0.9"/><rect x="456.2" y="85.2" width="12.2" height="1.6" fill="#666"/><path d="M474.6 79.10000000000001 h3 l-1.5 2.2z" fill="#222"/><circle cx="840.3" cy="12" r="2.8" fill="none" stroke="#e9d2c2" stroke-width="0.9"/><line x1="842.3" y1="14" x2="844.4" y2="16.2" stroke="#e9d2c2" stroke-width="1.2"/><path d="M847.6 12.6 h2.6 l-1.3 1.5z" fill="#e9d2c2"/><circle cx="1003" cy="14" r="5" fill="none" stroke="#e9d2c2" stroke-width="1"/><circle cx="1001.2" cy="12.6" r="0.7" fill="#e9d2c2"/><circle cx="1004.8" cy="12.6" r="0.7" fill="#e9d2c2"/><path d="M1000.5 15.2 q2.5 2.4 5 0" fill="none" stroke="#e9d2c2" stroke-width="0.9"/><path d="M1011.6 13.4 h3 l-1.5 1.7z" fill="#e9d2c2"/><path d="M957.4 35 v6 h10 v-3" fill="none" stroke="#e9d2c2" stroke-width="1.1"/><path d="M960 39.4 q1-4.4 5.6-4.6" fill="none" stroke="#e9d2c2" stroke-width="1.2"/><path d="M964.6 32.4 l3.2 2.3 l-3.2 2.3z" fill="#e9d2c2"/><path d="M1005 38.4 l3.3 -3.2 l3.3 3.2" fill="none" stroke="#e9d2c2" stroke-width="1.4"/><path d="M955.6 66.6 l3.6 2.8 l-3.6 2.8z" fill="#111"/><rect x="971" y="51.3" width="17" height="18.2" rx="1.5" fill="#fff" stroke="#8a8a8a" stroke-width="0.9"/><rect x="971.4" y="51.7" width="16.2" height="3" fill="#e2e2e2"/><line x1="971" y1="54.8" x2="988" y2="54.8" stroke="#8a8a8a" stroke-width="0.7"/><rect x="972.4" y="52.4" width="1.3" height="1.3" fill="#555"/><circle cx="984.4" cy="65.4" r="6.3" fill="#e06a1e" stroke="#fff" stroke-width="0.6"/><text x="984.4" y="68.6" text-anchor="middle" font-family="Liberation Sans" font-weight="700" font-size="8.4" fill="#fff">1</text><rect x="676.2" y="624" width="26.6" height="16" fill="#8c8c8c"/><rect x="684.2" y="626.8" width="10.4" height="9.6" rx="1.6" fill="#e6e6e6" stroke="#f4f4f4" stroke-width="0.6"/><line x1="685" y1="629.8" x2="693.8" y2="629.8" stroke="#8a8a8a" stroke-width="1"/><line x1="685" y1="633.2" x2="693.8" y2="633.2" stroke="#8a8a8a" stroke-width="1"/><rect x="709.4" y="627.4" width="9.6" height="8" fill="none" stroke="#2a2a2a" stroke-width="1"/><line x1="709.4" y1="629.4" x2="719" y2="629.4" stroke="#2a2a2a" stroke-width="1"/><line x1="711" y1="631.6" x2="715" y2="631.6" stroke="#2a2a2a" stroke-width="0.8"/><circle cx="718.6" cy="634.6" r="2.4" fill="#2a2a2a" stroke="#d8d8d8" stroke-width="0.6"/><path d="M736 628.2 h2.2 M737.4 630.6 h8.4 M739.4 630.6 h0 M736.6 633 h1.6 M739.8 633 h6 M736 635.4 h1.6 M739.2 635.4 h6.6" stroke="#2a2a2a" stroke-width="0.9"/><path d="M739.4 628.2 h6.4" stroke="#888" stroke-width="0.9"/><path d="M760.8 628.4 h9.8" stroke="#888" stroke-width="0.9"/><path d="M760.8 630.8 h9.8 M760.8 633.2 h8 M760.8 635.6 h9.8" stroke="#2a2a2a" stroke-width="0.9"/><rect x="786.4" y="628.2" width="9.6" height="8" fill="none" stroke="#2a2a2a" stroke-width="1.1"/><path d="M787.6 629.4 l1.4 1.4 M794.8 629.4 l-1.4 1.4 M787.6 635 l1.4 -1.4 M794.8 635 l-1.4 -1.4" stroke="#2a2a2a" stroke-width="0.6"/><line x1="848.2" y1="631.8" x2="854.2" y2="631.8" stroke="#2a2a2a" stroke-width="1.3"/><line x1="871.8" y1="632" x2="938.4" y2="632" stroke="#7a7a7a" stroke-width="2.6" stroke-linecap="round"/><circle cx="905" cy="632" r="0.8" fill="#eee"/><circle cx="898.4" cy="632" r="3.9" fill="#fafafa" stroke="#bcbcbc" stroke-width="0.5"/><path d="M956.6 631.8 h6 M959.6 628.8 v6" stroke="#2a2a2a" stroke-width="1.3"/><path d="M158.4 627.8 h4.6 v7.4 h-4.6z M163 627.8 h4.4 v4.2" fill="none" stroke="#2a2a2a" stroke-width="0.9"/><path d="M163 629 v7" stroke="#2a2a2a" stroke-width="0.9"/><path d="M165 634.8 l3.6 -3.8" stroke="#2a2a2a" stroke-width="0.9"/></svg>
</body></html>
